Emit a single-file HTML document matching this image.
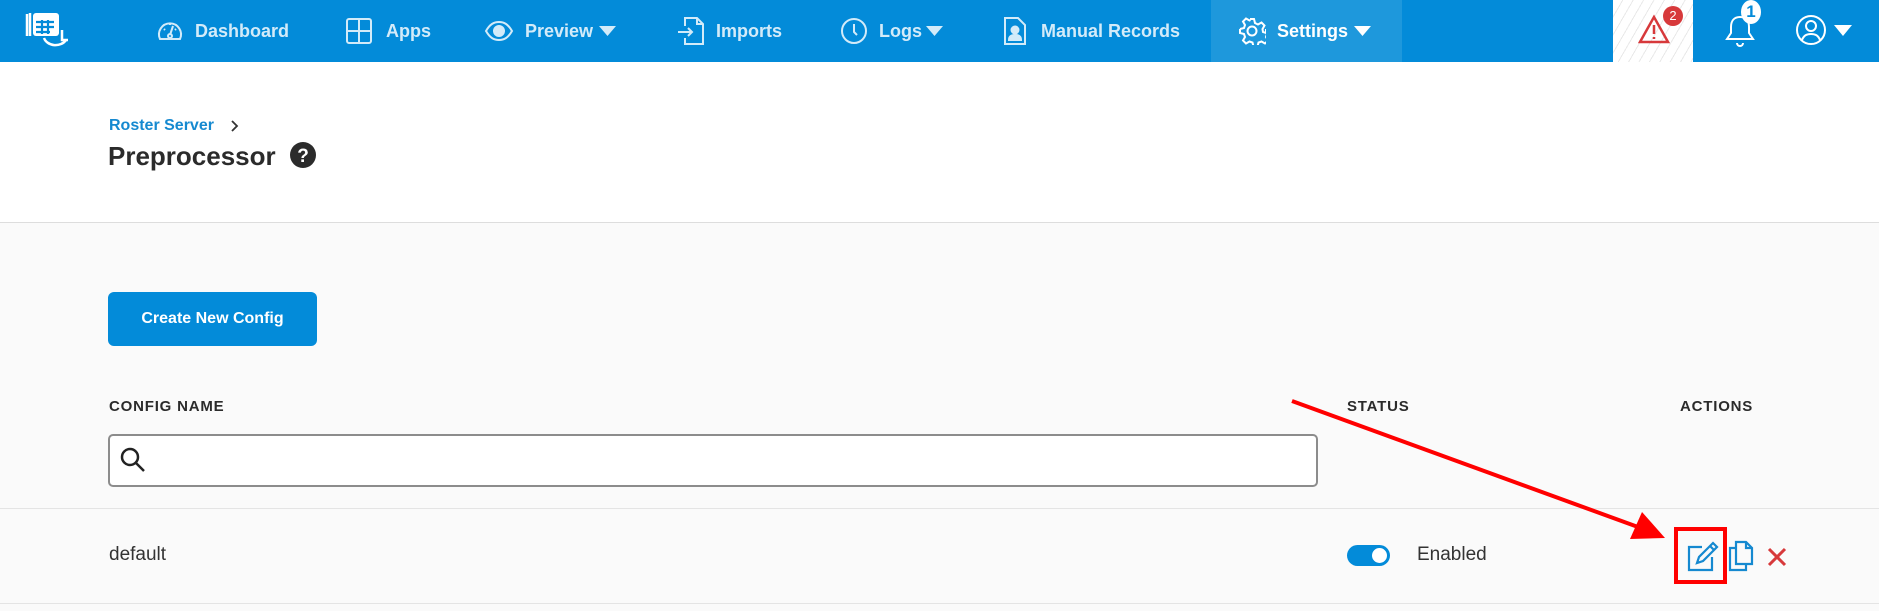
<!DOCTYPE html>
<html><head><meta charset="utf-8"><style>
*{box-sizing:border-box;margin:0;padding:0}
body{width:1879px;height:611px;overflow:hidden;background:#fafafa;font-family:"Liberation Sans",sans-serif;position:relative}
.nav{position:absolute;left:0;top:0;width:1879px;height:62px;background:#038bd9}
.ni{position:absolute;top:0;height:62px;display:flex;align-items:center;color:#d3ebf9;font-weight:bold;font-size:18px}
.ni svg{position:absolute}
.a{position:absolute}
.top{position:absolute;left:0;top:62px;width:1879px;height:161px;background:#fff;border-bottom:1px solid #ddd}
.hdr{position:absolute;top:398px;font-weight:bold;font-size:15px;letter-spacing:0.8px;color:#2b2b2b}
</style></head><body>
<div class="nav">
  <svg class="a" style="left:24px;top:10px" width="52" height="42" viewBox="0 0 52 42" fill="none" stroke="#fff" stroke-width="2.5">
    <path d="M3 4v22M6 3v23"/>
    <rect x="9" y="3" width="26" height="23" rx="3" fill="#fff" stroke="none"/>
    <g stroke="#038bd9" stroke-width="2.2"><path d="M12 12h18M12 17h18M12 22h14M18 10v14M24 10v14"/></g>
    <path d="M20 28a12 10 0 0 0 22 2" /><path d="M38 20v10h6"/>
  </svg>
  <div class="ni" style="left:156px;width:140px">
    <svg style="left:0" width="28" height="28" viewBox="0 0 28 28" fill="none" stroke="#d3ebf9" stroke-width="2"><path d="M4 22a11 11 0 1 1 20 0z"/><path d="M14 18l3-9"/><circle cx="14" cy="19" r="2"/><path d="M8 12l1 1M20 12l-1 1M14 7v1"/></svg>
    <span style="margin-left:39px">Dashboard</span></div>
  <div class="ni" style="left:345px">
    <svg style="left:0" width="28" height="28" viewBox="0 0 28 28" fill="none" stroke="#d3ebf9" stroke-width="2"><rect x="2" y="2" width="24" height="24" rx="2"/><path d="M14 2v24M2 14h24"/></svg>
    <span style="margin-left:41px">Apps</span></div>
  <div class="ni" style="left:484px">
    <svg style="left:0" width="30" height="28" viewBox="0 0 30 28" fill="none" stroke="#d3ebf9" stroke-width="2"><path d="M2 14c4-7 8-9 13-9s9 2 13 9c-4 7-8 9-13 9s-9-2-13-9z"/><circle cx="15" cy="14" r="5" fill="#d3ebf9"/></svg>
    <span style="margin-left:41px">Preview</span>
    <svg style="left:115px" width="17" height="10" viewBox="0 0 17 10"><path d="M0 0h17L8.5 10z" fill="#d3ebf9"/></svg></div>
  <div class="ni" style="left:677px">
    <svg style="left:0" width="28" height="30" viewBox="0 0 28 30" fill="none" stroke="#d3ebf9" stroke-width="2"><path d="M8 10V2h12l6 6v20H8v-6M20 2v6h6M1 16h14M11 12l4 4-4 4"/></svg>
    <span style="margin-left:39px">Imports</span></div>
  <div class="ni" style="left:840px">
    <svg style="left:0" width="28" height="28" viewBox="0 0 28 28" fill="none" stroke="#d3ebf9" stroke-width="2"><circle cx="14" cy="14" r="12"/><path d="M14 7v8l3 3"/></svg>
    <span style="margin-left:39px">Logs</span>
    <svg style="left:86px" width="17" height="10" viewBox="0 0 17 10"><path d="M0 0h17L8.5 10z" fill="#d3ebf9"/></svg></div>
  <div class="ni" style="left:1003px">
    <svg style="left:0" width="24" height="30" viewBox="0 0 24 30" fill="none" stroke="#d3ebf9" stroke-width="2"><path d="M2 2h13l7 7v19H2z"/><circle cx="12" cy="14" r="3.5" fill="#d3ebf9"/><path d="M6 24c0-4 3-5 6-5s6 1 6 5z" fill="#d3ebf9"/></svg>
    <span style="margin-left:38px">Manual Records</span></div>
  <div class="a" style="left:1211px;top:0;width:191px;height:62px;background:#1e98dc"></div>
  <div class="ni" style="left:1238px;color:#fff">
    <svg style="left:0" width="28" height="28" viewBox="0 0 28 28" fill="none" stroke="#fff" stroke-width="2"><path d="M12 2h4l1 4 3 1.5 3.5-2 3 3-2 3.5L25 15l3 1v-4M2 12v4l4 1 1 3-2 3.5 3 3 3.5-2 3 1 1 4h4l1-4 3-1 3.5 2 3-3-2-3.5 1-3"/><path d="M2 12l4-1 1-3-2-3.5 3-3 3.5 2 1-.5"/><circle cx="14" cy="14" r="4.5"/></svg>
    <span style="margin-left:39px">Settings</span>
    <svg style="left:116px" width="17" height="10" viewBox="0 0 17 10"><path d="M0 0h17L8.5 10z" fill="#fff"/></svg></div>
  <div class="a" style="left:1613px;top:0;width:80px;height:62px;background:repeating-linear-gradient(120deg,#fff 0 8px,#e9e9e9 8px 9px)"></div>
  <svg class="a" style="left:1638px;top:14px" width="32" height="30" viewBox="0 0 32 30" fill="none" stroke="#d7393b" stroke-width="2.5"><path d="M16 3L2 28h28z"/><path d="M16 11v9M16 23v2"/></svg>
  <div class="a" style="left:1663px;top:6px;width:20px;height:20px;border-radius:50%;background:#d7393b;color:#fff;font-size:13px;text-align:center;line-height:20px">2</div>
  <svg class="a" style="left:1724px;top:14px" width="32" height="34" viewBox="0 0 32 34" fill="none" stroke="#fff" stroke-width="2"><path d="M16 3c-6 0-9 4-9 10v6l-4 6h26l-4-6v-6c0-6-3-10-9-10zM13 29a3 3 0 0 0 6 0"/></svg>
  <div class="a" style="left:1741px;top:0;width:20px;height:24px;border-radius:50%;background:#fff;color:#038bd9;font-weight:bold;font-size:17px;text-align:center;line-height:24px">1</div>
  <svg class="a" style="left:1795px;top:14px" width="32" height="32" viewBox="0 0 32 32" fill="none" stroke="#fff" stroke-width="2"><circle cx="16" cy="16" r="14"/><circle cx="16" cy="12" r="5"/><path d="M7 26c2-5 5-6 9-6s7 1 9 6"/></svg>
  <svg class="a" style="left:1834px;top:25px" width="18" height="11" viewBox="0 0 18 11"><path d="M0 0h18L9 11z" fill="#fff"/></svg>
</div>
<div class="top"></div>
<div class="a" style="left:109px;top:117px;font-size:16px;color:#1589d0;font-weight:bold">Roster Server</div>
<svg class="a" style="left:230px;top:119px" width="10" height="14" viewBox="0 0 10 14" fill="none" stroke="#333" stroke-width="1.8"><path d="M2 2l5 5-5 5"/></svg>
<div class="a" style="left:108px;top:141px;font-size:26px;color:#2b2b2b;font-weight:bold">Preprocessor</div>
<svg class="a" style="left:290px;top:142px" width="26" height="26" viewBox="0 0 26 26"><circle cx="13" cy="13" r="13" fill="#2b2b2b"/><text x="13" y="20" text-anchor="middle" font-family="Liberation Sans" font-weight="bold" font-size="19" fill="#fff">?</text></svg>
<div class="a" style="left:108px;top:292px;width:209px;height:54px;background:#038bd9;border-radius:6px;color:#fff;font-weight:bold;font-size:16px;line-height:54px;text-align:center">Create New Config</div>
<div class="hdr" style="left:109px">CONFIG NAME</div>
<div class="hdr" style="left:1347px">STATUS</div>
<div class="hdr" style="left:1680px">ACTIONS</div>
<div class="a" style="left:108px;top:434px;width:1210px;height:53px;background:#fff;border:2px solid #8c8c8c;border-radius:5px"></div>
<svg class="a" style="left:119px;top:446px" width="28" height="28" viewBox="0 0 28 28" fill="none" stroke="#222" stroke-width="2.5"><circle cx="11" cy="11" r="8"/><path d="M17 17l8 8"/></svg>
<div class="a" style="left:0;top:508px;width:1879px;height:1px;background:#e4e4e4"></div>
<div class="a" style="left:0;top:603px;width:1879px;height:1px;background:#e4e4e4"></div>
<div class="a" style="left:109px;top:544px;font-size:19px;color:#333">default</div>
<div class="a" style="left:1347px;top:545px;width:43px;height:21px;border-radius:11px;background:#038bd9"></div>
<div class="a" style="left:1372px;top:548px;width:15px;height:15px;border-radius:50%;background:#fff"></div>
<div class="a" style="left:1417px;top:544px;font-size:19px;color:#333">Enabled</div>
<svg class="a" style="left:1686px;top:540px" width="34" height="32" viewBox="0 0 34 32" fill="none" stroke="#1589d0" stroke-width="2.2"><path d="M16 7H3v23h23V17"/><path d="M27 3l4 4-14 14-6 2 2-6z"/><path d="M24 6l4 4"/></svg>
<svg class="a" style="left:1728px;top:540px" width="26" height="32" viewBox="0 0 26 32" fill="none" stroke="#1589d0" stroke-width="2.2"><path d="M8 2h10l6 6v16H8zM18 2v6h6"/><path d="M8 8H2v22h16v-6"/></svg>
<svg class="a" style="left:1767px;top:547px" width="20" height="20" viewBox="0 0 20 20" stroke="#d7393b" stroke-width="3"><path d="M2 2l16 16M18 2L2 18"/></svg>
<div class="a" style="left:1674px;top:527px;width:53px;height:57px;border:4px solid #f00"></div>
<svg class="a" style="left:0;top:0" width="1879" height="611" viewBox="0 0 1879 611"><path d="M1292 401L1638 527" stroke="#f00" stroke-width="4"/><path d="M1665 538L1630 539L1642 512z" fill="#f00"/></svg>
</body></html>
